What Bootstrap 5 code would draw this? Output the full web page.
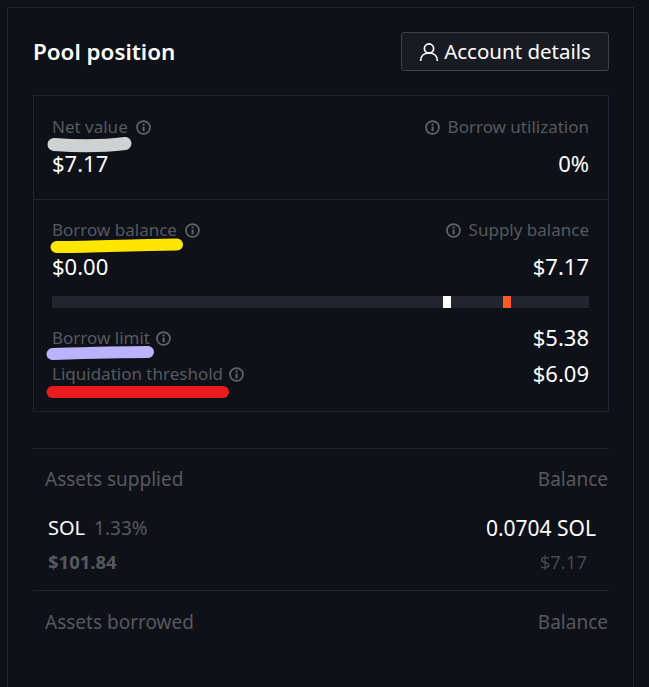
<!DOCTYPE html>
<html lang="en">
<head>
    <meta charset="UTF-8">
    <meta name="viewport" content="width=device-width, initial-scale=1.0">
    <title>Pool position</title>
    <link href="https://cdn.jsdelivr.net/npm/bootstrap@5.3.2/dist/css/bootstrap.min.css" rel="stylesheet">
    <style>
        html, body { height: 687px; overflow: hidden; }
        body { background: #0e1118; color: #fff; font-family: "Noto Sans", "Liberation Sans", sans-serif; position: relative; }
        .pool-panel { margin: 7px 0 0 7px; width: 627px; height: 680px; border: 1px solid #20242c; border-bottom: 0; padding: 24px 24px 0 25px; }
        .pool-head { height: 39px; margin-bottom: 24px; }
        .pool-title { font-size: 22.4px; font-weight: 600; line-height: 39px; margin: 0; }
        .acct-btn { width: 208px; height: 39px; padding: 0; font-size: 20.5px; line-height: 1; color: #fff; background: #181b22; border: 1px solid #3f4145; border-radius: 3px; gap: 5px; }
        .acct-btn:hover { color: #fff; background: #181b22; border-color: #3f4145; }
        .stat-box { border: 1px solid #20242c; height: 317px; }
        .stat-top { height: 104px; padding: 20px 19px 0 18px; border-bottom: 1px solid #20242c; }
        .stat-bottom { padding: 19px 19px 0 18px; }
        .stat-row { height: 22px; }
        .val-row { height: 24px; margin-top: 14px; }
        .lbl { font-size: 17px; line-height: 22px; color: #56595e; }
        .val { font-size: 22px; line-height: 24px; color: #fff; padding-bottom: 2px; }
        .info-ico { width: 15px; height: 15px; flex: none; color: #606368; }
        .limit-bar { position: relative; height: 12px; background: #22252d; margin-top: 17px; margin-bottom: 12px; }
        .limit-mark { position: absolute; top: 0; width: 8px; height: 12px; }
        .limit-row { height: 36px; }
        .limit-gap { gap: 6px; }
        .asset-sec { margin-top: 36px; border-top: 1px solid #20242c; }
        .asset-head { height: 62px; padding: 18px 1px 0 12px; }
        .asset-head-low { padding-top: 19px; }
        .asset-lbl { font-size: 19px; line-height: 24px; color: #56595e; }
        .asset-row { padding: 0 13px 0 15px; height: 34px; }
        .coin-name { font-size: 20px; line-height: 28px; color: #fff; }
        .coin-bal { font-size: 21px; line-height: 28px; color: #fff; }
        .coin-rate { font-size: 19px; line-height: 28px; color: #56595e; margin-left: 9px; }
        .coin-price { font-size: 18.5px; font-weight: 700; line-height: 24px; color: #56595e; }
        .coin-usd { font-size: 18.5px; line-height: 24px; color: #45484d; padding-right: 9px; }
        .asset-sep { border-top: 1px solid #20242c; margin-top: 11px; }
        .marker-layer { position: absolute; left: 0; top: 0; pointer-events: none; }
    </style>
</head>
<body>
    <div class="pool-panel">
        <div class="pool-head d-flex justify-content-between align-items-center">
            <h2 class="pool-title">Pool position</h2>
            <button type="button" class="btn acct-btn d-flex align-items-center justify-content-center">
                <svg width="20" height="20" viewBox="0 0 20 20" fill="none" stroke="currentColor" stroke-width="1.7"><circle cx="10" cy="6.500" r="4.600"/><path d="M1.600 19c0-4.800 3.400-8 8.400-8s8.400 3.200 8.400 8"/></svg>
                Account details
            </button>
        </div>

        <div class="stat-box">
            <div class="stat-top">
                <div class="stat-row d-flex justify-content-between align-items-center">
                    <div class="d-flex align-items-center gap-2">
                        <span class="lbl">Net value</span>
                        <svg class="info-ico" viewBox="0 0 16 16"><use href="#i-info"/></svg>
                    </div>
                    <div class="d-flex align-items-center gap-2">
                        <svg class="info-ico" viewBox="0 0 16 16"><use href="#i-info"/></svg>
                        <span class="lbl">Borrow utilization</span>
                    </div>
                </div>
                <div class="val-row d-flex justify-content-between align-items-center val">
                    <span>$7.17</span><span>0%</span>
                </div>
            </div>
            <div class="stat-bottom">
                <div class="stat-row d-flex justify-content-between align-items-center">
                    <div class="d-flex align-items-center gap-2">
                        <span class="lbl">Borrow balance</span>
                        <svg class="info-ico" viewBox="0 0 16 16"><use href="#i-info"/></svg>
                    </div>
                    <div class="d-flex align-items-center gap-2">
                        <svg class="info-ico" viewBox="0 0 16 16"><use href="#i-info"/></svg>
                        <span class="lbl">Supply balance</span>
                    </div>
                </div>
                <div class="val-row d-flex justify-content-between align-items-center val">
                    <span>$0.00</span><span>$7.17</span>
                </div>
                <div class="limit-bar">
                    <div class="limit-mark bg-white" style="left: 72.8%"></div>
                    <div class="limit-mark" style="left: 84%; background: #ff5a26"></div>
                </div>
                <div class="limit-row d-flex justify-content-between align-items-center">
                    <div class="d-flex align-items-center limit-gap">
                        <span class="lbl">Borrow limit</span>
                        <svg class="info-ico" viewBox="0 0 16 16"><use href="#i-info"/></svg>
                    </div>
                    <span class="val">$5.38</span>
                </div>
                <div class="limit-row d-flex justify-content-between align-items-center">
                    <div class="d-flex align-items-center limit-gap">
                        <span class="lbl">Liquidation threshold</span>
                        <svg class="info-ico" viewBox="0 0 16 16"><use href="#i-info"/></svg>
                    </div>
                    <span class="val">$6.09</span>
                </div>
            </div>
        </div>

        <div class="asset-sec">
            <div class="asset-head d-flex justify-content-between asset-lbl">
                <span>Assets supplied</span><span>Balance</span>
            </div>
            <div class="asset-row d-flex justify-content-between align-items-center">
                <div><span class="coin-name">SOL</span><span class="coin-rate">1.33%</span></div>
                <span class="coin-bal">0.0704 SOL</span>
            </div>
            <div class="asset-row d-flex justify-content-between align-items-center">
                <span class="coin-price">$101.84</span>
                <span class="coin-usd">$7.17</span>
            </div>
            <div class="asset-sep"></div>
            <div class="asset-head asset-head-low d-flex justify-content-between asset-lbl">
                <span>Assets borrowed</span><span>Balance</span>
            </div>
        </div>
    </div>

    <svg width="0" height="0" class="position-absolute">
        <symbol id="i-info" viewBox="0 0 16 16">
            <circle cx="8" cy="8" r="6.900" fill="none" stroke="currentColor" stroke-width="1.900"/>
            <rect x="7" y="7" width="2.200" height="5" fill="currentColor"/>
            <rect x="7" y="3.800" width="2.200" height="2" fill="currentColor"/>
        </symbol>
    </svg>

    <!-- marker strokes drawn on top of the screenshot -->
    <svg class="marker-layer" width="649" height="687" fill="none" stroke-linecap="round">
        <path d="M54 144.500C75 146 105 146 125 143.500" stroke="#d0d1d3" stroke-width="13"/>
        <path d="M56.500 247C85 247 130 245 177 244.500" stroke="#ffe600" stroke-width="12"/>
        <path d="M52.500 354C85 353 120 352 148 352" stroke="#bcb3ff" stroke-width="12"/>
        <path d="M52.500 392L223 392" stroke="#e81c1c" stroke-width="12"/>
    </svg>

    <script src="https://cdn.jsdelivr.net/npm/bootstrap@5.3.2/dist/js/bootstrap.bundle.min.js"></script>
</body>
</html>
